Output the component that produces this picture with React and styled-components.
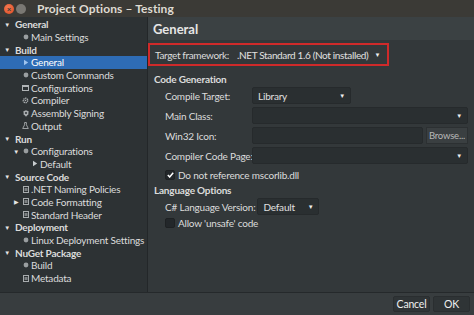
import React from 'react';
import styled, { createGlobalStyle } from 'styled-components';

const Global = createGlobalStyle`
  html, body { margin: 0; padding: 0; background: #33383a; }
  body { font-family: Lato, "Liberation Sans", sans-serif; }
`;

const Window = styled.div`
  width: 474px;
  height: 315px;
  display: flex;
  flex-direction: column;
  overflow: hidden;
  color: #dcdcdc;
  font-size: 10px;
  letter-spacing: -0.2px;
  white-space: nowrap;
`;

const TitleBar = styled.div`
  height: 17px;
  background: #3b3a36;
  display: flex;
  align-items: center;
  padding-left: 4px;
  gap: 2px;
`;

const WinBtn = styled.div`
  width: 10px;
  height: 10px;
  border-radius: 50%;
  background: ${(p) => (p.close ? 'radial-gradient(circle at 40% 35%, #f47a52, #dd4a22)' : '#7a7873')};
  display: flex;
  align-items: center;
  justify-content: center;
  font-size: 8px;
  line-height: 1;
  color: #3b3a36;
  font-weight: 700;
`;

const Title = styled.div`
  margin-left: 9px;
  font-weight: 700;
  font-size: 12px;
  color: #dfdbd2;
  letter-spacing: 0.1px;
`;

const Body = styled.div`
  flex: 1;
  display: flex;
  min-height: 0;
  border-bottom: 1px solid #25292b;
`;

const Sidebar = styled.div`
  width: 147px;
  background: #2d3234;
  border-right: 1px solid #232729;
  padding-top: 1px;
  overflow: hidden;
`;

const Row = styled.div`
  height: 12.7px;
  display: flex;
  align-items: center;
  padding-left: ${(p) => p.indent}px;
  background: ${(p) => (p.selected ? '#2e6cb5' : 'transparent')};
  color: ${(p) => (p.selected ? '#ffffff' : '#dcdcdc')};
  font-weight: ${(p) => (p.bold ? 700 : 400)};
`;

const Expander = styled.span`
  width: 8px;
  display: inline-flex;
  justify-content: center;
  font-size: 6px;
  color: #e6e6e6;
  margin-right: ${(p) => (p.bold ? 4 : 2)}px;
`;

const IconBox = styled.span`
  width: 7px;
  height: 8px;
  display: inline-flex;
  align-items: center;
  justify-content: center;
  margin-right: 2px;
`;

const Content = styled.div`
  flex: 1;
  display: flex;
  flex-direction: column;
  background: #33383a;
`;

const Header = styled.div`
  height: 23px;
  background: #3b4143;
  display: flex;
  align-items: center;
  padding-left: 5px;
  font-weight: 700;
  font-size: 13px;
  letter-spacing: 0;
  color: #e6e6e6;
`;

const Panel = styled.div`
  padding: 3px 0 0 0;
  display: flex;
  flex-direction: column;
`;

const Highlight = styled.div`
  box-sizing: border-box;
  width: 241px;
  height: 23px;
  border: 2px solid #cf2a2a;
  display: flex;
  align-items: center;
  padding-left: 5px;
  gap: 7px;
  letter-spacing: -0.35px;
`;

const Section = styled.div`
  font-weight: 700;
  padding-left: 6px;
  height: ${(p) => p.h}px;
  display: flex;
  align-items: flex-end;
`;

const FormGrid = styled.div`
  display: grid;
  grid-template-columns: 87px 216px;
  grid-auto-rows: 17px;
  row-gap: 3px;
  padding-left: 17px;
  margin-top: 2px;
  align-items: center;
`;

const Field = styled.div`
  height: 17px;
  width: ${(p) => (p.w ? `${p.w}px` : 'auto')};
  flex: ${(p) => (p.flat ? 1 : 'none')};
  box-sizing: border-box;
  background: ${(p) => (p.flat ? 'transparent' : '#2a2f31')};
  border: 1px solid ${(p) => (p.flat ? 'transparent' : '#262a2c')};
  border-radius: 2px;
  display: flex;
  align-items: center;
  justify-content: space-between;
  padding: ${(p) => (p.flat ? '0 6px 0 0' : '0 5px')};
  color: #e0e0e0;
`;

const Arrow = styled.span`
  font-size: 6px;
  color: #f0f0f0;
`;

const FieldPair = styled.div`
  display: flex;
  gap: 3px;
`;

const Browse = styled.div`
  width: 42px;
  height: 17px;
  box-sizing: border-box;
  background: #3a3f41;
  border: 1px solid #2c3032;
  display: flex;
  align-items: center;
  justify-content: center;
  color: #b8b8b8;
  font-size: 9.5px;
`;

const CheckRow = styled.div`
  display: flex;
  align-items: center;
  gap: 3px;
  padding-left: 17px;
  height: ${(p) => p.h}px;
`;

const Box = styled.span`
  width: 8px;
  height: 8px;
  border-radius: 2px;
  background: #23272a;
  border: 1px solid #1e2123;
  display: inline-flex;
  align-items: center;
  justify-content: center;
`;

const InlineRow = styled.div`
  display: flex;
  align-items: center;
  gap: 2px;
  padding-left: 17px;
  margin-top: 2px;
`;

const Footer = styled.div`
  height: 22px;
  display: flex;
  justify-content: flex-end;
  align-items: center;
  gap: 3px;
  padding-right: 4px;
  background: #383d3f;
`;

const Button = styled.div`
  width: 37px;
  height: 16px;
  box-sizing: border-box;
  background: #2f3436;
  border: 1px solid #2a2e30;
  border-radius: 2px;
  display: flex;
  align-items: center;
  justify-content: center;
  color: #f0f0f0;
  font-size: 10.5px;
`;

const Dot = () => (
  <svg width="6" height="6" viewBox="0 0 6 6"><circle cx="3" cy="3" r="2.4" fill="#9a9ea0" /></svg>
);
const Rect = () => (
  <svg width="7" height="6" viewBox="0 0 7 6"><rect x="0.5" y="0.5" width="6" height="5" fill="none" stroke="#b0b4b6" /><rect x="0.5" y="0.5" width="6" height="1.5" fill="#b0b4b6" /></svg>
);
const Doc = () => (
  <svg width="6" height="7" viewBox="0 0 6 7"><rect x="0.5" y="0.5" width="5" height="6" fill="none" stroke="#a8acae" /><rect x="1.5" y="2" width="3" height="3" fill="#7c8082" /></svg>
);
const Gear = () => (
  <svg width="7" height="7" viewBox="0 0 7 7"><circle cx="3.5" cy="3.5" r="2.2" fill="none" stroke="#a8acae" strokeWidth="1.4" strokeDasharray="1.2 0.6" /><circle cx="3.5" cy="3.5" r="0.8" fill="#a8acae" /></svg>
);
const Shield = () => (
  <svg width="6" height="7" viewBox="0 0 6 7"><path d="M3 0.3 L5.6 1.3 L5.3 4.2 L3 6.7 L0.7 4.2 L0.4 1.3 Z" fill="#a8acae" /><circle cx="3" cy="3" r="1" fill="#2d3234" /></svg>
);
const Flask = () => (
  <svg width="7" height="7" viewBox="0 0 7 7"><path d="M2.6 0.5 H4.4 V2.8 L6.3 6.5 H0.7 L2.6 2.8 Z" fill="none" stroke="#a8acae" strokeWidth="0.9" /></svg>
);
const Play = ({ color = '#c8ccce' }) => (
  <svg width="6" height="7" viewBox="0 0 6 7"><path d="M1 0.8 L5.2 3.5 L1 6.2 Z" fill={color} /></svg>
);

const tree = [
  { t: 'General', bold: true, exp: '▼', indent: 3 },
  { t: 'Main Settings', icon: <Dot />, indent: 22 },
  { t: 'Build', bold: true, exp: '▼', indent: 3 },
  { t: 'General', icon: <Play color="#9fc4ef" />, indent: 22, selected: true },
  { t: 'Custom Commands', icon: <Dot />, indent: 22 },
  { t: 'Configurations', icon: <Rect />, indent: 22 },
  { t: 'Compiler', icon: <Gear />, indent: 22 },
  { t: 'Assembly Signing', icon: <Shield />, indent: 22 },
  { t: 'Output', icon: <Flask />, indent: 22 },
  { t: 'Run', bold: true, exp: '▼', indent: 3 },
  { t: 'Configurations', icon: <Dot />, exp: '▼', indent: 12 },
  { t: 'Default', icon: <Play />, indent: 31 },
  { t: 'Source Code', bold: true, exp: '▼', indent: 3 },
  { t: '.NET Naming Policies', icon: <Doc />, indent: 22 },
  { t: 'Code Formatting', icon: <Doc />, exp: '▶', indent: 12 },
  { t: 'Standard Header', icon: <Doc />, indent: 22 },
  { t: 'Deployment', bold: true, exp: '▼', indent: 3 },
  { t: 'Linux Deployment Settings', icon: <Dot />, indent: 22 },
  { t: 'NuGet Package', bold: true, exp: '▼', indent: 3 },
  { t: 'Build', icon: <Dot />, indent: 22 },
  { t: 'Metadata', icon: <Doc />, indent: 22 },
];

const Check = () => (
  <svg width="7" height="6" viewBox="0 0 7 6"><path d="M0.8 3 L2.7 5 L6.2 0.8" fill="none" stroke="#ffffff" strokeWidth="1.5" /></svg>
);

export default function App() {
  return (
    <>
      <Global />
      <Window>
        <TitleBar>
          <WinBtn close>×</WinBtn>
          <WinBtn />
          <Title>Project Options – Testing</Title>
        </TitleBar>
        <Body>
          <Sidebar>
            {tree.map((r, i) => (
              <Row key={i} indent={r.indent} bold={r.bold} selected={r.selected}>
                {r.exp && <Expander bold={r.bold}>{r.exp}</Expander>}
                {r.icon && <IconBox>{r.icon}</IconBox>}
                {r.t}
              </Row>
            ))}
          </Sidebar>
          <Content>
            <Header>General</Header>
            <Panel>
              <Highlight>
                <span>Target framework:</span>
                <Field flat>
                  <span>.NET Standard 1.6 (Not installed)</span>
                  <Arrow>▼</Arrow>
                </Field>
              </Highlight>
              <Section h={19}>Code Generation</Section>
              <FormGrid>
                <span>Compile Target:</span>
                <Field w={99}><span>Library</span><Arrow>▼</Arrow></Field>
                <span>Main Class:</span>
                <Field><span /><Arrow>▼</Arrow></Field>
                <span>Win32 Icon:</span>
                <FieldPair><Field w={171} /><Browse>Browse...</Browse></FieldPair>
                <span>Compiler Code Page:</span>
                <Field><span /><Arrow>▼</Arrow></Field>
              </FormGrid>
              <CheckRow h={22}>
                <Box><Check /></Box>
                <span>Do not reference mscorlib.dll</span>
              </CheckRow>
              <Section h={10}>Language Options</Section>
              <InlineRow>
                <span>C# Language Version:</span>
                <Field w={62}><span>Default</span><Arrow>▼</Arrow></Field>
              </InlineRow>
              <CheckRow h={16}>
                <Box />
                <span>Allow 'unsafe' code</span>
              </CheckRow>
            </Panel>
          </Content>
        </Body>
        <Footer>
          <Button>Cancel</Button>
          <Button>OK</Button>
        </Footer>
      </Window>
    </>
  );
}
